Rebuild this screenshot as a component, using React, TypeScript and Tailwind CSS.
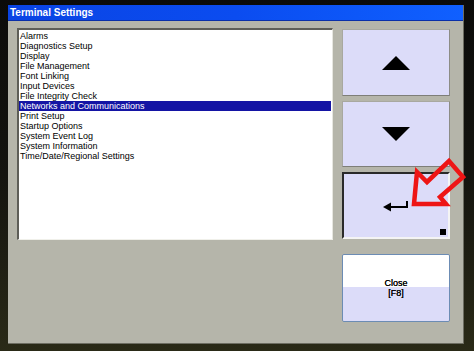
const items = [
  "Alarms",
  "Diagnostics Setup",
  "Display",
  "File Management",
  "Font Linking",
  "Input Devices",
  "File Integrity Check",
  "Networks and Communications",
  "Print Setup",
  "Startup Options",
  "System Event Log",
  "System Information",
  "Time/Date/Regional Settings",
];

const selected = 7;

export default function App() {
  return (
    <div
      className="relative w-[474px] h-[351px] overflow-hidden bg-gradient-to-b from-[#0b0b0a] via-[#14140f] to-[#2a2a17] pl-[8px] pt-[5px]"
      style={{ fontFamily: '"Liberation Sans", Arial, sans-serif' }}
    >
      <div className="w-[456px] h-[339px] flex flex-col bg-[#b5b5aa] border-r border-b border-[#6d6d62]">
        {/* title bar */}
        <div className="h-[16px] flex items-center pl-[2px] bg-gradient-to-r from-[#0a44e4] via-[#0b4cf0] to-[#1060ff] border-b border-[#0a2fa8]">
          <span className="text-[10px] font-bold text-white leading-none">Terminal Settings</span>
        </div>

        <div className="flex pl-[9px] pt-[7px] gap-[9px]">
          {/* list box */}
          <div className="w-[316px] h-[212px] bg-white border-t-2 border-l-2 border-t-[#5e5e58] border-l-[#5e5e58] border-r border-b border-r-[#e6e6e0] border-b-[#f0f0ea] pt-[1px]">
            {items.map((it, i) => (
              <div
                key={it}
                className={
                  i === selected
                    ? "h-[10px] leading-[10px] text-[9px] pl-[1px] mr-[1px] bg-[#1414a4] text-white"
                    : "h-[10px] leading-[10px] text-[9px] pl-[1px] text-black"
                }
              >
                {it}
              </div>
            ))}
          </div>

          {/* buttons */}
          <div className="flex flex-col w-[108px] pt-[1px]">
            <div className="h-[67px] flex items-center justify-center bg-[#dcdcf9] border border-t-[#a8a8a0] border-l-[#a8a8a0] border-r-[#8c8c86] border-b-[#7e7e78]">
              <svg width="28" height="14" viewBox="0 0 28 14">
                <polygon points="14,0 28,14 0,14" fill="#000" />
              </svg>
            </div>
            <div className="mt-[5px] h-[66px] flex items-center justify-center bg-[#dcdcf9] border border-t-[#a8a8a0] border-l-[#a8a8a0] border-r-[#8c8c86] border-b-[#7e7e78]">
              <svg width="28" height="14" viewBox="0 0 28 14">
                <polygon points="0,0 28,0 14,14" fill="#000" />
              </svg>
            </div>
            <div className="relative mt-[5px] h-[67px] flex items-center justify-center bg-[#dcdcf9] border-t-2 border-l-2 border-t-[#2a2a2a] border-l-[#2a2a2a] border-r-2 border-b-2 border-r-[#f4f4f4] border-b-[#f4f4f4]">
              <svg width="26" height="12" viewBox="0 0 26 12" className="mt-[2px]">
                <polyline points="24,0 24,6 4,6" fill="none" stroke="#000" strokeWidth="2" />
                <polygon points="0,6 8,1.5 8,10.5" fill="#000" />
              </svg>
              <div className="absolute right-[2px] bottom-[2px] w-[6px] h-[6px] bg-black" />
            </div>
            <div className="relative mt-[15px] h-[68px] flex flex-col rounded-[2px] border border-[#6c8cb4] overflow-hidden">
              <div className="h-[32px] bg-white" />
              <div className="flex-1 bg-[#dcdcf9]" />
              <div className="absolute inset-0 flex flex-col items-center justify-center text-[9px] leading-[10px] text-black [text-shadow:0_0_0.4px_#000]">
                <span>Close</span>
                <span>[F8]</span>
              </div>
            </div>
          </div>
        </div>
      </div>

      {/* red annotation arrow */}
      <svg className="absolute left-0 top-0" width="474" height="351" viewBox="0 0 474 351">
        <polygon
          points="414,204 417,172 427,182 449,161 463,177 440,197 446,204"
          fill="none"
          stroke="#ee1515"
          strokeWidth="4.5"
          strokeLinejoin="miter"
        />
      </svg>
    </div>
  );
}
